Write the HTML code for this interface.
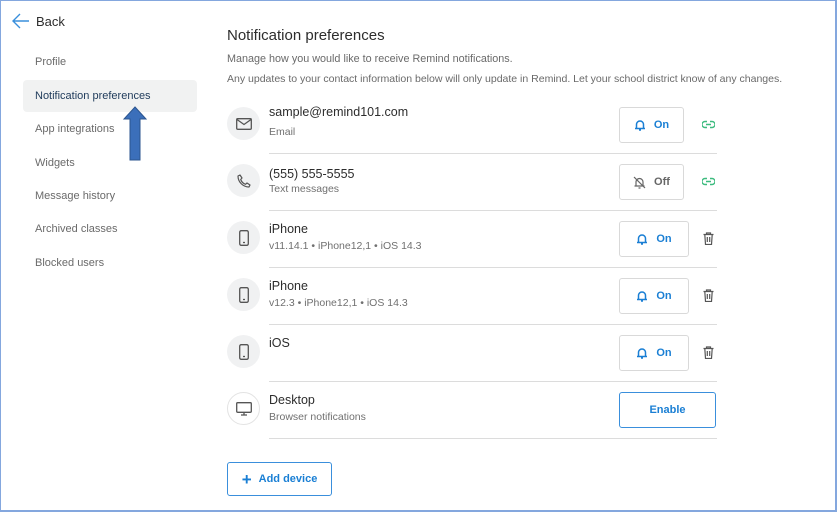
<!DOCTYPE html>
<html><head><meta charset="utf-8"><style>
*{margin:0;padding:0;box-sizing:border-box}
body{width:837px;height:512px;background:#fff;font-family:"Liberation Sans",sans-serif;position:relative;overflow:hidden;color:#2d2d2d}
.frame{position:absolute;left:0;top:0;width:837px;height:512px;border:2px solid #84a7de;border-top-width:1px;border-left-width:1px}
.a{position:absolute;white-space:nowrap}
.nav{font-size:11px;color:#6a6a6a;left:35px}
.t{font-size:12.5px;color:#2d2d2d;left:269px}
.s{font-size:10.5px;color:#707070;left:269px}
.ic{position:absolute;left:227px;width:33px;height:33px;border-radius:50%;background:#f0f1f2;display:flex;align-items:center;justify-content:center}
.sep{position:absolute;left:269px;width:448px;height:1px;background:#dcdcdc}
.btn{position:absolute;left:619px;height:36px;border:1px solid #d9d9d9;border-radius:3px;display:flex;align-items:center;justify-content:center;font-size:11px;font-weight:bold;color:#1a7fd4;gap:8px}
.tr{position:absolute;left:702px}
</style></head><body>
<div class="frame"></div>
<svg class="a" style="left:12px;top:13px" width="18" height="16" viewBox="0 0 18 16"><path d="M8 1L1 8l7 7M1 8h16" fill="none" stroke="#3a8fdc" stroke-width="1.4"/></svg>
<div class="a" style="left:36px;top:14px;font-size:13px;color:#2d2d2d">Back</div>
<div class="a nav" style="top:56px">Profile</div>
<div class="a" style="left:23px;top:80px;width:174px;height:32px;background:#f1f2f2;border-radius:4px"></div>
<div class="a nav" style="top:90px;color:#1e3a5a">Notification preferences</div>
<div class="a nav" style="top:123px">App integrations</div>
<div class="a nav" style="top:157px">Widgets</div>
<div class="a nav" style="top:190px">Message history</div>
<div class="a nav" style="top:223px">Archived classes</div>
<div class="a nav" style="top:257px">Blocked users</div>
<svg class="a" style="left:122px;top:106px" width="26" height="56" viewBox="0 0 26 56"><path d="M13 1L24 13H18V54H8V13H2Z" fill="#3b6fba" stroke="#2b558f" stroke-width="1"/></svg>

<div class="a" style="left:227px;top:27px;font-size:15px;color:#2d2d2d">Notification preferences</div>
<div class="a" style="left:227px;top:53px;font-size:10.8px;color:#6a6a6a">Manage how you would like to receive Remind notifications.</div>
<div class="a" style="left:227px;top:73px;font-size:10.55px;letter-spacing:-0.02px;color:#6a6a6a">Any updates to your contact information below will only update in Remind. Let your school district know of any changes.</div>

<!-- row1 -->
<div class="ic" style="top:107px"><svg width="16" height="12" viewBox="0 0 16 12"><rect x="0.7" y="0.7" width="14.6" height="10.6" rx="1" fill="none" stroke="#555" stroke-width="1.3"/><path d="M1 1.5l7 5 7-5" fill="none" stroke="#555" stroke-width="1.3"/></svg></div>
<div class="a t" style="top:105px">sample@remind101.com</div>
<div class="a s" style="top:126px">Email</div>
<div class="btn" style="top:107px;width:65px"><svg width="12" height="12" viewBox="0 0 12 12"><path d="M2.5 9V5.5a3.5 3.5 0 0 1 7 0V9M1 9.5h10M5 11h2" fill="none" stroke="#1a7fd4" stroke-width="1.5"/></svg>On</div>
<svg class="tr" style="top:120px" width="13" height="9" viewBox="0 0 13 9"><path d="M5 1.5H3a3 3 0 0 0 0 6h2M8 1.5h2a3 3 0 0 1 0 6H8M4 4.5h5" fill="none" stroke="#3dbb7f" stroke-width="1.4"/></svg>
<div class="sep" style="top:153px"></div>

<!-- row2 -->
<div class="ic" style="top:164px"><svg width="14" height="14" viewBox="0 0 14 14"><path d="M3 1l2 3-1.3 1.5a8 8 0 0 0 4.8 4.8L10 9l3 2-1 2c-6 0-11-5-11-11z" fill="none" stroke="#555" stroke-width="1.2" stroke-linejoin="round"/></svg></div>
<div class="a t" style="top:167px">(555) 555-5555</div>
<div class="a s" style="top:183px">Text messages</div>
<div class="btn" style="top:164px;width:65px;color:#666"><svg width="13" height="13" viewBox="0 0 13 13"><path d="M3 9.5V6a3.5 3.5 0 0 1 7 0v3.5M1.5 10h10M5.5 12h2M1 1l11 11" fill="none" stroke="#666" stroke-width="1.2"/></svg>Off</div>
<svg class="tr" style="top:177px" width="13" height="9" viewBox="0 0 13 9"><path d="M5 1.5H3a3 3 0 0 0 0 6h2M8 1.5h2a3 3 0 0 1 0 6H8M4 4.5h5" fill="none" stroke="#3dbb7f" stroke-width="1.4"/></svg>
<div class="sep" style="top:210px"></div>

<!-- rows 3-5 -->
<div class="ic" style="top:221px"><svg width="10" height="16" viewBox="0 0 10 16"><rect x="0.7" y="0.7" width="8.6" height="14.6" rx="1.5" fill="none" stroke="#555" stroke-width="1.3"/><path d="M4 12.5h2" stroke="#555" stroke-width="1.3"/></svg></div>
<div class="a t" style="top:222px">iPhone</div>
<div class="a s" style="top:240px">v11.14.1 • iPhone12,1 • iOS 14.3</div>
<div class="btn" style="top:221px;width:70px"><svg width="12" height="12" viewBox="0 0 12 12"><path d="M2.5 9V5.5a3.5 3.5 0 0 1 7 0V9M1 9.5h10M5 11h2" fill="none" stroke="#1a7fd4" stroke-width="1.5"/></svg>On</div>
<svg class="tr" style="top:232px;left:703px" width="11" height="13" viewBox="0 0 11 13"><path d="M0.5 2.5h10M3.5 2.5V1h4v1.5M1.8 2.5l.7 10h6l.7-10M4.3 5v5M6.7 5v5" fill="none" stroke="#555" stroke-width="1.2"/></svg>
<div class="sep" style="top:267px"></div>

<div class="ic" style="top:278px"><svg width="10" height="16" viewBox="0 0 10 16"><rect x="0.7" y="0.7" width="8.6" height="14.6" rx="1.5" fill="none" stroke="#555" stroke-width="1.3"/><path d="M4 12.5h2" stroke="#555" stroke-width="1.3"/></svg></div>
<div class="a t" style="top:279px">iPhone</div>
<div class="a s" style="top:297px">v12.3 • iPhone12,1 • iOS 14.3</div>
<div class="btn" style="top:278px;width:70px"><svg width="12" height="12" viewBox="0 0 12 12"><path d="M2.5 9V5.5a3.5 3.5 0 0 1 7 0V9M1 9.5h10M5 11h2" fill="none" stroke="#1a7fd4" stroke-width="1.5"/></svg>On</div>
<svg class="tr" style="top:289px;left:703px" width="11" height="13" viewBox="0 0 11 13"><path d="M0.5 2.5h10M3.5 2.5V1h4v1.5M1.8 2.5l.7 10h6l.7-10M4.3 5v5M6.7 5v5" fill="none" stroke="#555" stroke-width="1.2"/></svg>
<div class="sep" style="top:324px"></div>

<div class="ic" style="top:335px"><svg width="10" height="16" viewBox="0 0 10 16"><rect x="0.7" y="0.7" width="8.6" height="14.6" rx="1.5" fill="none" stroke="#555" stroke-width="1.3"/><path d="M4 12.5h2" stroke="#555" stroke-width="1.3"/></svg></div>
<div class="a t" style="top:336px">iOS</div>
<div class="btn" style="top:335px;width:70px"><svg width="12" height="12" viewBox="0 0 12 12"><path d="M2.5 9V5.5a3.5 3.5 0 0 1 7 0V9M1 9.5h10M5 11h2" fill="none" stroke="#1a7fd4" stroke-width="1.5"/></svg>On</div>
<svg class="tr" style="top:346px;left:703px" width="11" height="13" viewBox="0 0 11 13"><path d="M0.5 2.5h10M3.5 2.5V1h4v1.5M1.8 2.5l.7 10h6l.7-10M4.3 5v5M6.7 5v5" fill="none" stroke="#555" stroke-width="1.2"/></svg>
<div class="sep" style="top:381px"></div>

<div class="ic" style="top:392px;background:#fff;border:1px solid #e3e3e3"><svg width="16" height="14" viewBox="0 0 16 14"><rect x="0.7" y="0.7" width="14.6" height="9.6" rx="1" fill="none" stroke="#555" stroke-width="1.3"/><path d="M5 13h6M8 10.5V13" stroke="#555" stroke-width="1.3"/></svg></div>
<div class="a t" style="top:393px">Desktop</div>
<div class="a s" style="top:411px">Browser notifications</div>
<div class="btn" style="top:392px;left:619px;width:97px;border-color:#3a8fdc">Enable</div>
<div class="sep" style="top:438px"></div>

<div class="btn" style="top:462px;left:227px;width:105px;height:34px;border-color:#3a8fdc;gap:7px"><span style="font-size:17px;line-height:1">+</span>Add device</div>
</body></html>
